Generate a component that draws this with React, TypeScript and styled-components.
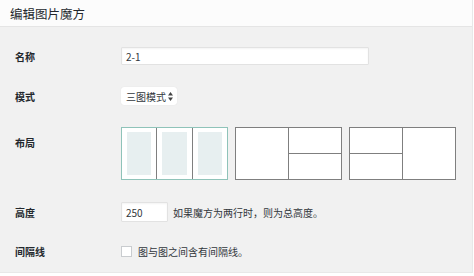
import React from "react";
import styled, { createGlobalStyle } from "styled-components";

const GlobalStyle = createGlobalStyle`
  html, body {
    margin: 0;
    padding: 0;
    background: #ffffff;
  }
  body {
    font-family: "Noto Sans CJK SC", "Liberation Sans", sans-serif;
    color: #23282d;
  }
`

const Panel = styled.div`
  width: 472px;
  height: 272px;
  background: #f1f1f1;
  border-right: 1px solid #e8e8e8;
  border-bottom: 1px solid #e8e8e8;
  overflow: hidden;
`

const Header = styled.div`
  height: 26px;
  display: flex;
  align-items: center;
  padding-left: 10px;
  background: #fcfcfc;
  border-bottom: 1px solid #e5e5e5;
  font-size: 12.5px;
  color: #23282d;
`

const Body = styled.div`
  padding-top: 9px;
  display: flex;
  flex-direction: column;
`

const Row = styled.div<{ $top?: boolean }>`
  display: flex;
  align-items: ${p => (p.$top ? "flex-start" : "center")};
  padding: 11px 0;
  padding-left: 15px;
`

const Label = styled.div<{ $offset?: number }>`
  width: 106px;
  flex: none;
  font-size: 10px;
  font-weight: 700;
  color: #23282d;
  padding-top: ${p => p.$offset || 0}px;
`

const Field = styled.div`
  display: flex;
  align-items: center;
  gap: 5px;
  font-size: 10px;
  color: #32373c;
`

const TextInput = styled.div<{ $w: number; $h: number }>`
  width: ${p => p.$w}px;
  height: ${p => p.$h}px;
  box-sizing: border-box;
  background: #fff;
  border: 1px solid #e2e2e2;
  box-shadow: inset 0 1px 2px rgba(0, 0, 0, 0.05);
  border-radius: 1px;
  padding-left: 4px;
  display: flex;
  align-items: center;
  font-size: 10px;
  color: #32373c;
`

const Select = styled.div`
  width: 56px;
  height: 18px;
  box-sizing: border-box;
  background: #fff;
  border-radius: 3px;
  box-shadow: 0 0 1px rgba(0, 0, 0, 0.12);
  display: flex;
  align-items: center;
  justify-content: space-between;
  padding: 0 4px 0 5px;
  font-size: 10px;
  color: #32373c;
`

const Layouts = styled.div`
  display: flex;
  gap: 7px;
`

const LayoutBox = styled.div<{ $active?: boolean }>`
  width: 107px;
  height: 53px;
  box-sizing: border-box;
  border: 1px solid ${p => (p.$active ? "#8fc3b9" : "#7f7f7f")};
  background: #fff;
  display: flex;
`

const Col = styled.div<{ $active?: boolean }>`
  flex: 1;
  display: flex;
  flex-direction: column;
  & + & {
    border-left: 1px solid ${p => (p.$active ? "#a5bfb9" : "#7f7f7f")};
  }
`

const Cell = styled.div<{ $active?: boolean }>`
  flex: 1;
  display: flex;
  & + & {
    border-top: 1px solid #7f7f7f;
  }
  ${p =>
    p.$active &&
    `
    padding: 4px 5px;
    &::before {
      content: "";
      flex: 1;
      background: #e7eff0;
    }
  `}
`

const Check = styled.div`
  width: 11px;
  height: 11px;
  box-sizing: border-box;
  background: #fff;
  border: 1px solid #c9cccf;
  margin-right: 1px;
`

const Hint = styled.span`
  font-size: 10px;
  color: #32373c;
`

function Arrows() {
  return (
    <svg width="5" height="9" viewBox="0 0 5 9">
      <path d="M2.5 0 L5 3.5 L0 3.5 Z" fill="#444" />
      <path d="M2.5 9 L5 5.5 L0 5.5 Z" fill="#444" />
    </svg>
  )
}

export default function App() {
  return (
    <>
      <GlobalStyle />
      <Panel>
        <Header>编辑图片魔方</Header>
        <Body>
          <Row>
            <Label>名称</Label>
            <Field>
              <TextInput $w={248} $h={18}>2-1</TextInput>
            </Field>
          </Row>
          <Row>
            <Label>模式</Label>
            <Field>
              <Select>
                三图模式
                <Arrows />
              </Select>
            </Field>
          </Row>
          <Row $top>
            <Label $offset={8}>布局</Label>
            <Layouts>
              <LayoutBox $active>
                {[0, 1, 2].map(i => (
                  <Col key={i} $active>
                    <Cell $active />
                  </Col>
                ))}
              </LayoutBox>
              <LayoutBox>
                <Col>
                  <Cell />
                </Col>
                <Col>
                  <Cell />
                  <Cell />
                </Col>
              </LayoutBox>
              <LayoutBox>
                <Col>
                  <Cell />
                  <Cell />
                </Col>
                <Col>
                  <Cell />
                </Col>
              </LayoutBox>
            </Layouts>
          </Row>
          <Row>
            <Label>高度</Label>
            <Field>
              <TextInput $w={47} $h={20}>250</TextInput>
              <Hint>如果魔方为两行时，则为总高度。</Hint>
            </Field>
          </Row>
          <Row>
            <Label>间隔线</Label>
            <Field>
              <Check />
              <Hint>图与图之间含有间隔线。</Hint>
            </Field>
          </Row>
        </Body>
      </Panel>
    </>
  )
}
